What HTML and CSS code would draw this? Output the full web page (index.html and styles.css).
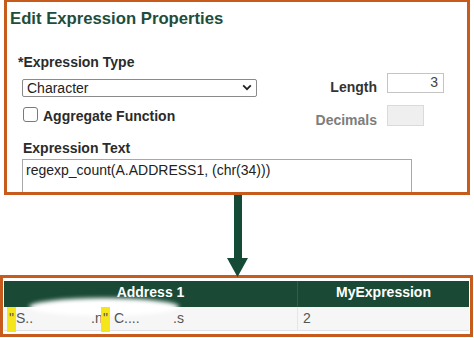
FILE: index.html
```html
<!DOCTYPE html>
<html lang="en">
<head>
<meta charset="utf-8">
<title>Edit Expression Properties</title>
<link rel="stylesheet" href="styles.css">
</head>
<body>
<div class="page">
  <section class="props">
    <h1 class="title">Edit Expression Properties</h1>
    <div class="type-label">*Expression Type</div>
    <div class="form-grid">
      <div class="select">
        <span class="select-text">Character</span>
        <svg class="chev" width="10" height="7" viewBox="0 0 10 7"><path d="M1.2 1.4 L5 5.2 L8.8 1.4" fill="none" stroke="#222" stroke-width="1.8"/></svg>
      </div>
      <div class="field-label len-label">Length</div>
      <div class="input len-input">3</div>

      <div class="check-row">
        <span class="checkbox"></span>
        <span class="check-text">Aggregate Function</span>
      </div>
      <div class="field-label dec-label">Decimals</div>
      <div class="input dec-input"></div>
    </div>
    <div class="expr-label">Expression Text</div>
    <div class="textarea">regexp_count(A.ADDRESS1, (chr(34)))</div>
  </section>

  <div class="arrow">
    <svg width="24" height="82" viewBox="0 0 24 82"><rect x="8" y="0" width="8" height="64" fill="#154a37"/><polygon points="1,63 22,63 11.5,82" fill="#154a37"/></svg>
  </div>

  <section class="result">
    <div class="smear"></div>
    <div class="grid-head">
      <div class="cell c1">Address 1</div>
      <div class="cell c2">MyExpression</div>
    </div>
    <div class="grid-row">
      <div class="cell c1 addr">
        <span class="hl">"</span><span class="f1">S..</span><span class="f2">.n</span><span class="hl">"</span><span class="f3"> C....</span><span class="f4">.s</span>
      </div>
      <div class="cell c2 num">2</div>
    </div>
  </section>
</div>
</body>
</html>
```

FILE: styles.css
```css
* { box-sizing: border-box; }

html, body {
  margin: 0;
  padding: 0;
  background: #ffffff;
}

body {
  font-family: "Liberation Sans", Arial, sans-serif;
  color: #333333;
}

.page {
  width: 474px;
  height: 338px;
  overflow: hidden;
}

/* ---------- top properties box ---------- */
.props {
  margin-left: 4px;
  width: 466px;
  height: 195px;
  border: 3px solid #c75b1c;
  border-top-width: 2px;
  padding-left: 3px;
  overflow: hidden;
}

.title {
  margin: 6px 0 0 0;
  font-size: 16.7px;
  line-height: 22px;
  font-weight: bold;
  color: #1f4d3c;
}

.type-label {
  margin: 24px 0 0 8px;
  font-size: 14px;
  line-height: 17px;
  font-weight: bold;
  color: #2b2b2b;
}

.form-grid {
  margin: 2px 0 0 12px;
  width: 422px;
  display: grid;
  grid-template-columns: 1fr auto 57px;
  grid-template-rows: 24px 21px;
  column-gap: 10px;
  row-gap: 8px;
}

.select {
  margin-top: 6px;
  width: 235px;
  height: 18px;
  border: 1px solid #8a8a8a;
  border-radius: 2px;
  display: flex;
  align-items: flex-start;
  justify-content: space-between;
  padding: 0 4px 0 4px;
  font-size: 14px;
  line-height: 16px;
  color: #222;
}

.chev {
  margin-top: 4px;
}

.field-label {
  justify-self: end;
  font-size: 14px;
  line-height: 17px;
  font-weight: bold;
}

.len-label { margin-top: 6px; color: #333; }
.dec-label { margin-top: 7px; color: #7d7d7d; }

.input {
  border: 1px solid #c4c4c4;
  font-size: 14px;
  line-height: 17px;
  color: #444;
}

.len-input {
  width: 57px;
  height: 20px;
  text-align: right;
  padding-right: 5px;
}

.dec-input {
  width: 37px;
  height: 21px;
  background: #efefef;
  border-color: #dadada;
}

.check-row {
  display: flex;
  align-items: flex-start;
}

.checkbox {
  margin: 2px 0 0 1px;
  width: 15px;
  height: 15px;
  border: 1px solid #7a7a7a;
  border-radius: 3px;
  background: #fff;
}

.check-text {
  margin: 3px 0 0 5px;
  font-size: 14px;
  line-height: 17px;
  font-weight: bold;
  color: #2b2b2b;
}

.expr-label {
  margin: 14px 0 0 13px;
  font-size: 14px;
  line-height: 17px;
  font-weight: bold;
  color: #2b2b2b;
}

.textarea {
  margin: 2px 0 0 12px;
  width: 390px;
  height: 50px;
  border: 1px solid #a8a8a8;
  padding: 2px 3px;
  font-size: 14px;
  line-height: 17px;
  color: #222;
}

/* ---------- arrow ---------- */
.arrow {
  height: 80px;
  padding-left: 226px;
}

.arrow svg {
  display: block;
  position: relative;
  z-index: 2;
}

/* ---------- result grid ---------- */
.result {
  position: relative;
  width: 473px;
  height: 62px;
  border: 3px solid #c75b1c;
  padding: 3px 1px;
}

.grid-head,
.grid-row {
  display: flex;
}

.grid-head {
  height: 26px;
  background: #1a4a36;
  color: #ffffff;
  font-weight: bold;
  font-size: 14px;
  line-height: 23px;
}

.grid-row {
  height: 24px;
  background: #f6f6f6;
  border-bottom: 1px solid #dfe3e8;
  font-size: 14px;
  line-height: 23px;
  color: #555;
}

.cell.c1 { width: 294px; }
.cell.c2 { flex: 1; }

.grid-head .cell { text-align: center; }
.grid-head .c1 { border-right: 1px solid #2f5f4a; }
.grid-row .c1 { border-right: 1px solid #e6e6e6; }

.num { padding-left: 5px; }

.addr {
  display: flex;
  padding-left: 3px;
  white-space: pre;
  position: relative;
  z-index: 2;
}

.hl {
  display: block;
  background: #f5e61c;
  width: 9px;
  height: 25px;
  padding-left: 2px;
}

.f1 { width: 20px; }
.f2 { margin-left: 55px; width: 10px; }
.f3 { width: 45px; }
.f4 { margin-left: 18px; }

.smear {
  position: absolute;
  z-index: 1;
  left: 26px;
  top: 20px;
  width: 150px;
  height: 18px;
  border-radius: 50%;
  background: #ffffff;
  filter: blur(2px);
}
```
